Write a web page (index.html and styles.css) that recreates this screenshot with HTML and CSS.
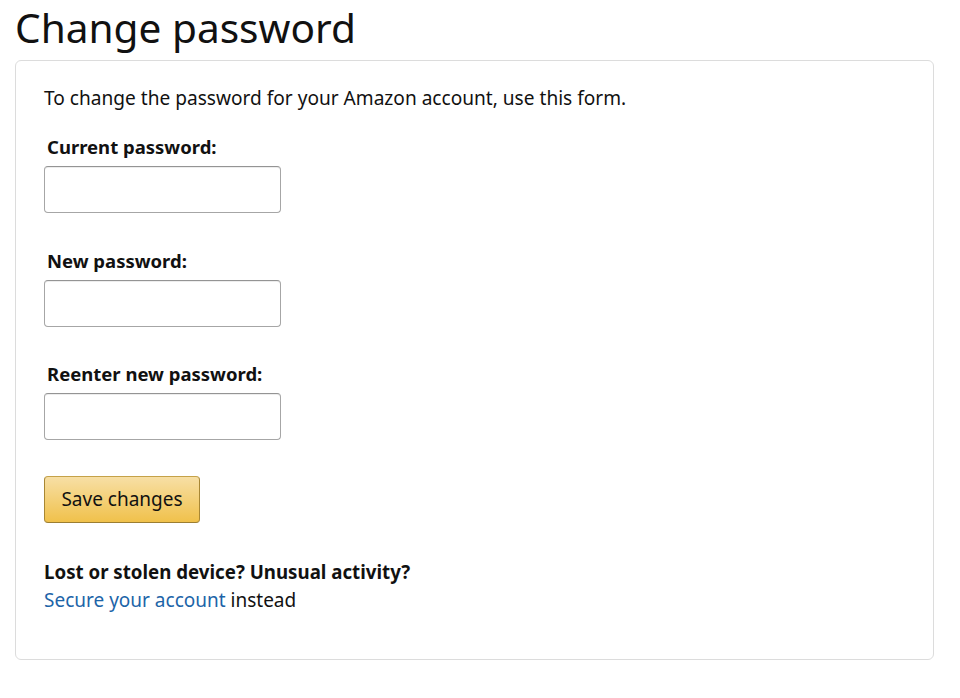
FILE: index.html
```html
<!DOCTYPE html>
<html>
<head>
<meta charset="utf-8">
<link rel="stylesheet" href="styles.css">
</head>
<body>
<div class="page">
  <h1 class="title">Change password</h1>
  <div class="box">
    <p class="intro">To change the password for your Amazon account, use this form.</p>
    <form class="form">
      <div class="field">
        <label class="label">Current password:</label>
        <input class="input" type="password">
      </div>
      <div class="field">
        <label class="label">New password:</label>
        <input class="input" type="password">
      </div>
      <div class="field">
        <label class="label">Reenter new password:</label>
        <input class="input" type="password">
      </div>
      <button class="btn" type="button">Save changes</button>
    </form>
    <div class="help">
      <div class="help-title">Lost or stolen device? Unusual activity?</div>
      <div class="help-text"><a class="link" href="#">Secure your account</a> instead</div>
    </div>
  </div>
</div>
</body>
</html>
```
FILE: styles.css
```css
html, body {
  margin: 0;
  padding: 0;
  background: #fff;
}
body {
  font-family: "Noto Sans", "Open Sans", sans-serif;
  color: #111;
}
.page {
  padding: 0 26px 0 15px;
}
.title {
  margin: 0;
  font-size: 40.6px;
  font-weight: 400;
  line-height: 56px;
  letter-spacing: 0;
}
.box {
  margin-top: 4px;
  border: 1px solid #dcdcdc;
  border-radius: 6px;
  height: 600px;
  box-sizing: border-box;
  padding: 24px 28px 0 28px;
}
.intro {
  margin: 0;
  font-size: 19.1px;
  line-height: 26px;
}
.form {
  display: flex;
  flex-direction: column;
  align-items: flex-start;
  margin-top: 23px;
}
.field {
  display: flex;
  flex-direction: column;
  margin-bottom: 34.5px;
}
.label {
  font-size: 18.5px;
  font-weight: 700;
  line-height: 26px;
  padding-left: 3px;
  margin-bottom: 6px;
}
.input {
  width: 237px;
  height: 47px;
  box-sizing: border-box;
  border: 1px solid #a6a6a6;
  border-top-color: #949494;
  border-radius: 4px;
  box-shadow: 0 1px 0 rgba(255,255,255,.5), 0 1px 0 rgba(0,0,0,.07) inset;
  margin: 0;
}
.btn {
  margin-top: 1px;
  width: 156px;
  height: 47px;
  box-sizing: border-box;
  border: 1px solid #a88734;
  border-color: #c5a249 #a88734 #9c7e31;
  border-radius: 4px;
  background: linear-gradient(to bottom, #f7dfa5, #f0c14b);
  font-family: "Noto Sans", "Open Sans", sans-serif;
  font-size: 19px;
  color: #111;
  padding: 0;
  cursor: pointer;
}
.help {
  margin-top: 34px;
}
.help-title {
  font-size: 18.7px;
  font-weight: 700;
  line-height: 29.5px;
}
.help-text {
  font-size: 19px;
  line-height: 29.5px;
}
.link {
  color: #1c64a8;
  text-decoration: none;
}
```
